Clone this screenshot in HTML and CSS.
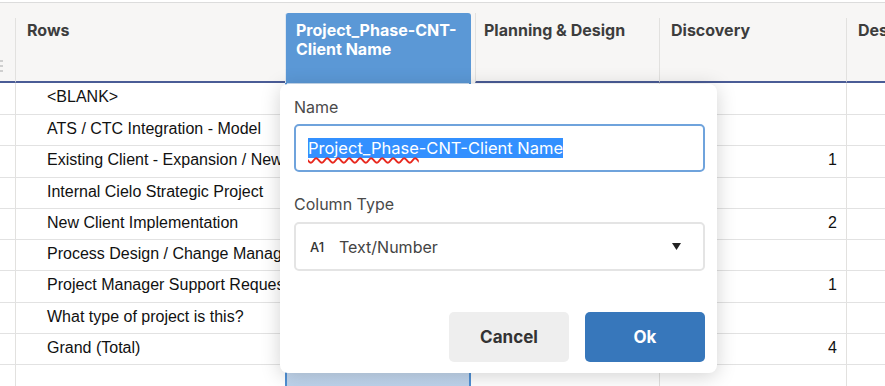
FILE: index.html
```html
<!DOCTYPE html>
<html lang="en">
<head>
    <meta charset="UTF-8">
    <meta name="viewport" content="width=device-width, initial-scale=1.0">
    <title>Pivot columns</title>
    <link rel="stylesheet" href="styles.css">
</head>
<body>
    <div class="grid">
        <div class="head">
            <div class="hcell c0">
                <svg class="edge-icon" width="10" height="20" viewBox="0 0 10 20">
                    <path d="M0 4h6M0 9h6M0 14h6" stroke="#cfcfcf" stroke-width="2" fill="none"/>
                </svg>
            </div>
            <div class="hcell c1">Rows</div>
            <div class="c2 hsel">
                <div class="hsel-box">Project_Phase-CNT-Client Name</div>
            </div>
            <div class="hcell c3 tall">Planning &amp; Design</div>
            <div class="hcell c4">Discovery</div>
            <div class="hcell c5">Design</div>
        </div>

        <div class="row first">
            <div class="cell c0"></div>
            <div class="cell c1">&lt;BLANK&gt;</div>
            <div class="cell c2 sel"></div>
            <div class="cell c3"></div>
            <div class="cell c4 num"></div>
            <div class="cell c5"></div>
        </div>
        <div class="row">
            <div class="cell c0"></div>
            <div class="cell c1">ATS / CTC Integration - Model</div>
            <div class="cell c2 sel"></div>
            <div class="cell c3"></div>
            <div class="cell c4 num"></div>
            <div class="cell c5"></div>
        </div>
        <div class="row">
            <div class="cell c0"></div>
            <div class="cell c1">Existing Client - Expansion / New</div>
            <div class="cell c2 sel"></div>
            <div class="cell c3"></div>
            <div class="cell c4 num">1</div>
            <div class="cell c5"></div>
        </div>
        <div class="row">
            <div class="cell c0"></div>
            <div class="cell c1">Internal Cielo Strategic Project</div>
            <div class="cell c2 sel"></div>
            <div class="cell c3"></div>
            <div class="cell c4 num"></div>
            <div class="cell c5"></div>
        </div>
        <div class="row">
            <div class="cell c0"></div>
            <div class="cell c1">New Client Implementation</div>
            <div class="cell c2 sel"></div>
            <div class="cell c3"></div>
            <div class="cell c4 num">2</div>
            <div class="cell c5"></div>
        </div>
        <div class="row">
            <div class="cell c0"></div>
            <div class="cell c1">Process Design / Change Management</div>
            <div class="cell c2 sel"></div>
            <div class="cell c3"></div>
            <div class="cell c4 num"></div>
            <div class="cell c5"></div>
        </div>
        <div class="row">
            <div class="cell c0"></div>
            <div class="cell c1">Project Manager Support Request</div>
            <div class="cell c2 sel"></div>
            <div class="cell c3"></div>
            <div class="cell c4 num">1</div>
            <div class="cell c5"></div>
        </div>
        <div class="row">
            <div class="cell c0"></div>
            <div class="cell c1">What type of project is this?</div>
            <div class="cell c2 sel"></div>
            <div class="cell c3"></div>
            <div class="cell c4 num"></div>
            <div class="cell c5"></div>
        </div>
        <div class="row">
            <div class="cell c0"></div>
            <div class="cell c1">Grand (Total)</div>
            <div class="cell c2 sel"></div>
            <div class="cell c3"></div>
            <div class="cell c4 num">4</div>
            <div class="cell c5"></div>
        </div>
        <div class="row last">
            <div class="cell c0"></div>
            <div class="cell c1"></div>
            <div class="cell c2 sel"></div>
            <div class="cell c3"></div>
            <div class="cell c4 num"></div>
            <div class="cell c5"></div>
        </div>
    </div>

    <div class="popup">
        <label class="field-label">Name</label>
        <div class="input">
            <span class="picked"><span class="typo">Project_Phase</span>-CNT-Client Name</span>
        </div>

        <label class="field-label second">Column Type</label>
        <div class="select">
            <span class="type-icon">A1</span>
            <span class="type-text">Text/Number</span>
            <svg class="caret" width="9" height="7" viewBox="0 0 9 7">
                <path d="M0 0h9L4.5 7z" fill="#222"/>
            </svg>
        </div>

        <div class="actions">
            <button class="btn cancel">Cancel</button>
            <button class="btn ok">Ok</button>
        </div>
    </div>
</body>
</html>
```

FILE: styles.css
```css
html,body
{
    padding: 0;
    margin: 0;
}
*
{
    box-sizing: border-box;
}
body
{
    width: 885px;
    height: 386px;
    overflow: hidden;
    background: #fff;
    font-family: "Liberation Sans", Arial, sans-serif;
    padding-top: 2px;
}

/* header */
.head
{
    height: 81px;
    display: flex;
    padding-top: 10px;
    background: #f7f6f5;
    border-top: 1px solid #dcdcdc;
    font-family: Inter, "Noto Sans", sans-serif;
    font-weight: 700;
    font-size: 16px;
    line-height: 19px;
    color: #3d3d3d;
}
.hcell
{
    margin-top: 5px;
    padding: 3px 11px 0 11px;
    border-bottom: 2px solid #4a5c96;
    white-space: nowrap;
    overflow: hidden;
}
.hcell.tall
{
    margin-top: 0;
    padding-top: 8px;
    padding-left: 8px;
}
.c0
{
    width: 15px;
    flex: none;
}
.hcell.c0
{
    padding: 0;
    position: relative;
}
.edge-icon
{
    position: absolute;
    left: -3px;
    top: 39px;
}
.c1
{
    width: 270px;
    flex: none;
    border-left: 1px solid #e2e1df;
}
.c2
{
    width: 190px;
    flex: none;
}
.c3
{
    width: 184px;
    flex: none;
}
.c4
{
    width: 187px;
    flex: none;
    border-left: 1px solid #e2e1df;
}
.c5
{
    flex: 1;
    border-left: 1px solid #e2e1df;
}
.hcell.c3
{
    border-left: 1px solid #e2e1df;
}
.hsel
{
    padding-right: 4px;
}
.hsel-box
{
    height: 100%;
    background: #5b98d6;
    color: #fff;
    border-radius: 3px 3px 0 0;
    border-left: 1px solid #dfe7f0;
    padding: 8px 8px 0 10px;
}

/* body rows */
.row
{
    display: flex;
    height: 31.25px;
    border-bottom: 1px solid #e2e2e2;
    font-size: 16px;
    line-height: 20px;
    color: #111;
}
.row.first
{
    height: 32px;
}
.row.last
{
    height: 30px;
    border-bottom: none;
}
.cell
{
    padding-top: 4px;
    white-space: nowrap;
    overflow: hidden;
}
.cell.c1
{
    padding-left: 31px;
}
.cell.num
{
    text-align: right;
    padding-right: 9px;
}
.cell.sel
{
    width: 186px;
    margin-right: 4px;
    background: linear-gradient(#c9dcf1, #b8cfea);
    border-left: 2px solid #4f8fd3;
    border-right: 2px solid #4f8fd3;
}

/* column popup */
.popup
{
    position: absolute;
    left: 280px;
    top: 84px;
    width: 437px;
    height: 289px;
    background: #fff;
    border-radius: 8px;
    box-shadow: 0 3px 20px rgba(0, 0, 0, 0.18);
    padding: 14px 12px 0 14px;
    font-family: Inter, "Noto Sans", sans-serif;
}
.field-label
{
    display: block;
    font-size: 16px;
    line-height: 19px;
    color: #4a4a4a;
    margin-bottom: 7px;
}
.field-label.second
{
    margin-top: 23px;
    margin-bottom: 8px;
}
.input
{
    height: 48px;
    border: 2px solid #6fa3dc;
    border-radius: 5px;
    padding: 11px 0 0 12px;
    font-size: 16.5px;
    line-height: 22px;
}
.picked
{
    background: #3390ff;
    color: #fff;
}
.typo
{
    text-decoration-line: underline;
    text-decoration-style: wavy;
    text-decoration-color: #e8281e;
    text-decoration-thickness: 1.5px;
    text-underline-offset: 3px;
}
.select
{
    height: 49px;
    border: 2px solid #e4e4e4;
    border-radius: 5px;
    display: flex;
    align-items: center;
    padding: 0 22px 0 14px;
    color: #444;
}
.type-icon
{
    font-size: 13px;
    font-weight: 500;
    color: #333;
    width: 29px;
}
.type-text
{
    font-size: 16px;
    flex: 1;
}
.actions
{
    display: flex;
    justify-content: flex-end;
    gap: 16px;
    margin-top: 41px;
}
.btn
{
    width: 120px;
    height: 50px;
    border: none;
    border-radius: 5px;
    font-family: Inter, "Noto Sans", sans-serif;
    font-size: 17px;
    font-weight: 700;
    cursor: pointer;
}
.cancel
{
    background: #eeeeee;
    color: #333;
}
.ok
{
    background: #3777bb;
    color: #fff;
}
```
